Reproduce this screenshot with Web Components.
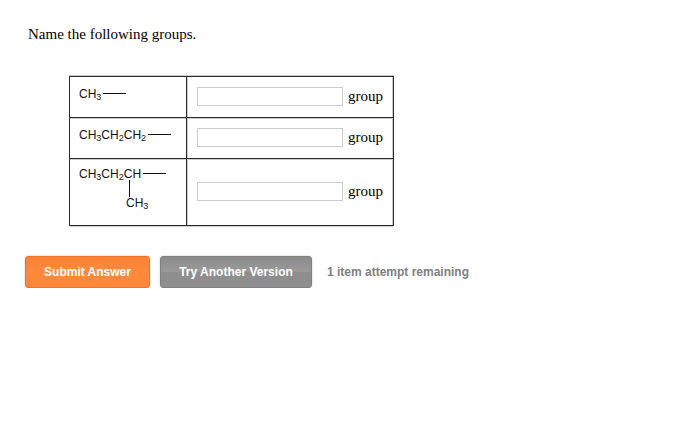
<!DOCTYPE html>
<html>
<head>
<meta charset="utf-8">
<style>
  html, body { margin: 0; background: #fff; }
  body { font-family: "Liberation Serif", serif; color: #000; }
</style>
</head>
<body>
<question-page>
  <span slot="prompt">Name the following groups.</span>
  <group-table slot="table">
    <group-row style="--row-height: 40px; --chem-top: 10px">
      <chem-line>CH<sub>3</sub></chem-line>
    </group-row>
    <group-row style="--row-height: 40px; --chem-top: 10px">
      <chem-line>CH<sub>3</sub>CH<sub>2</sub>CH<sub>2</sub></chem-line>
    </group-row>
    <group-row style="--row-height: 66px; --chem-top: 8px">
      <chem-line>CH<sub>3</sub>CH<sub>2</sub>CH</chem-line>
      <chem-branch>CH<sub>3</sub></chem-branch>
    </group-row>
  </group-table>
  <action-bar slot="actions">
    <action-button kind="primary">Submit Answer</action-button>
    <action-button kind="secondary">Try Another Version</action-button>
    <span>1 item attempt remaining</span>
  </action-bar>
</question-page>

<script>
class QuestionPage extends HTMLElement
{
  constructor()
  {
    super();
    this.attachShadow({mode: "open"});
    this.shadowRoot.innerHTML = `
      <style>
        :host { display: block; padding: 26px 0 0 28px; }
        .prompt { font-size: 15px; line-height: 17px; }
        .table { display: block; margin: 33px 0 0 41px; }
        .actions { display: block; margin: 30px 0 0 -3px; }
      </style>
      <div class="prompt"><slot name="prompt"></slot></div>
      <div class="table"><slot name="table"></slot></div>
      <div class="actions"><slot name="actions"></slot></div>
    `;
  }
}

class GroupTable extends HTMLElement
{
  constructor()
  {
    super();
    this.attachShadow({mode: "open"});
    this.shadowRoot.innerHTML = `
      <style>
        :host {
          display: block;
          width: 323px;
          border-top: 1px solid #2b2b2b;
          border-left: 1px solid #2b2b2b;
          border-right: 1px solid #2b2b2b;
          box-shadow: 0 -1px 0 #ccc, inset -1px 0 0 #ccc;
        }
      </style>
      <slot></slot>
    `;
  }
}

class GroupRow extends HTMLElement
{
  constructor()
  {
    super();
    this.attachShadow({mode: "open"});
    this.shadowRoot.innerHTML = `
      <style>
        :host {
          display: grid;
          grid-template-columns: 117px 1fr;
          height: var(--row-height);
          border-bottom: 1px solid #2b2b2b;
          box-shadow: 0 1px 0 #ccc;
        }
        .formula {
          border-right: 1px solid #2b2b2b;
          box-shadow: 1px 0 0 #ccc;
          padding: var(--chem-top) 0 0 9px;
          font-family: "Liberation Sans", sans-serif;
          font-size: 12px;
          color: #111;
        }
        .answer {
          display: flex;
          align-items: center;
          gap: 5px;
          padding: 0 0 1px 10px;
          font-size: 15px;
        }
        input {
          box-sizing: border-box;
          width: 146px;
          height: 19px;
          margin: 0;
          padding: 0;
          border: 1px solid #ccc;
          background: #fff;
          outline: none;
        }
      </style>
      <div class="formula"><slot></slot></div>
      <div class="answer"><input type="text"><span>group</span></div>
    `;
  }
}

class ChemLine extends HTMLElement
{
  constructor()
  {
    super();
    this.attachShadow({mode: "open"});
    this.shadowRoot.innerHTML = `
      <style>
        :host { display: flex; align-items: center; height: 14px; line-height: 14px; white-space: nowrap; }
        ::slotted(sub) { font-size: 9px; line-height: 0; vertical-align: -2px; }
        .bond { width: 23px; height: 1px; margin: 0 0 2px 2px; background: #111; }
      </style>
      <span><slot></slot></span><span class="bond"></span>
    `;
  }
}

class ChemBranch extends HTMLElement
{
  constructor()
  {
    super();
    this.attachShadow({mode: "open"});
    this.shadowRoot.innerHTML = `
      <style>
        :host { display: block; margin-left: 47px; white-space: nowrap; }
        .stem { width: 1px; height: 17px; margin: -1px 0 0 3px; background: #111; }
        .label { line-height: 13px; }
        ::slotted(sub) { font-size: 9px; line-height: 0; vertical-align: -2px; }
      </style>
      <div class="stem"></div>
      <div class="label"><slot></slot></div>
    `;
  }
}

class ActionBar extends HTMLElement
{
  constructor()
  {
    super();
    this.attachShadow({mode: "open"});
    this.shadowRoot.innerHTML = `
      <style>
        :host {
          display: flex;
          align-items: center;
          gap: 10px;
          font-family: "Liberation Sans", sans-serif;
          font-size: 12px;
          font-weight: bold;
        }
        ::slotted(span) { margin-left: 5px; color: #808080; }
      </style>
      <slot></slot>
    `;
  }
}

class ActionButton extends HTMLElement
{
  constructor()
  {
    super();
    this.attachShadow({mode: "open"});
    const primary = this.getAttribute("kind") === "primary";
    const width = primary ? 125 : 152;
    const skin = primary
      ? "background: linear-gradient(#fb8235, #ff8a3c 50%, #fe8537); border-color: #f0702a;"
      : "background: linear-gradient(#8b8b8b, #999 48%, #8d8d8d 52%, #8f8f8f); border-color: #7f7f7f;";
    this.shadowRoot.innerHTML = `
      <style>
        :host { display: block; }
        button {
          box-sizing: border-box;
          display: block;
          width: ${width}px;
          height: 32px;
          padding: 0;
          border: 1px solid;
          border-radius: 3px;
          ${skin}
          box-shadow: 0 0 2px rgba(0, 0, 0, 0.25);
          color: #fff;
          font: inherit;
        }
      </style>
      <button type="button"><slot></slot></button>
    `;
  }
}

customElements.define("question-page", QuestionPage);
customElements.define("group-table", GroupTable);
customElements.define("group-row", GroupRow);
customElements.define("chem-line", ChemLine);
customElements.define("chem-branch", ChemBranch);
customElements.define("action-bar", ActionBar);
customElements.define("action-button", ActionButton);
</script>
</body>
</html>
